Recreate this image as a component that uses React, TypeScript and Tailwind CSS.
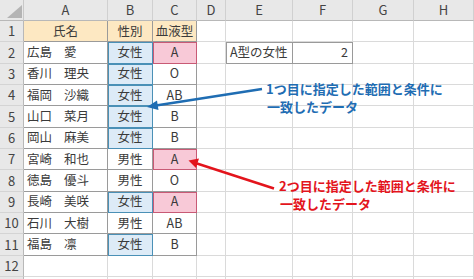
const cols = ['A', 'B', 'C', 'D', 'E', 'F', 'G', 'H'];

type Fill = 'head' | 'blue' | 'pink' | null;

const people: { sei: string; mei: string; sex: string; blood: string; sexFill: Fill; bloodFill: Fill }[] = [
  { sei: '広島', mei: '愛', sex: '女性', blood: 'A', sexFill: 'blue', bloodFill: 'pink' },
  { sei: '香川', mei: '理央', sex: '女性', blood: 'O', sexFill: 'blue', bloodFill: null },
  { sei: '福岡', mei: '沙織', sex: '女性', blood: 'AB', sexFill: 'blue', bloodFill: null },
  { sei: '山口', mei: '菜月', sex: '女性', blood: 'B', sexFill: 'blue', bloodFill: null },
  { sei: '岡山', mei: '麻美', sex: '女性', blood: 'B', sexFill: 'blue', bloodFill: null },
  { sei: '宮崎', mei: '和也', sex: '男性', blood: 'A', sexFill: null, bloodFill: 'pink' },
  { sei: '徳島', mei: '優斗', sex: '男性', blood: 'O', sexFill: null, bloodFill: null },
  { sei: '長崎', mei: '美咲', sex: '女性', blood: 'A', sexFill: 'blue', bloodFill: 'pink' },
  { sei: '石川', mei: '大樹', sex: '男性', blood: 'AB', sexFill: null, bloodFill: null },
  { sei: '福島', mei: '凛', sex: '女性', blood: 'B', sexFill: 'blue', bloodFill: null },
];

const font = { fontFamily: '"Noto Sans CJK JP", "Noto Sans", sans-serif' };

function Cell({
  children,
  fill = null,
  table = false,
  align = 'center',
  className = '',
}: {
  children?: React.ReactNode;
  fill?: Fill;
  table?: boolean;
  align?: 'left' | 'center' | 'right';
  className?: string;
}) {
  let tone = 'bg-white border-[#dadada]';
  if (table) tone = 'bg-white border-[#9a9a9a]';
  if (fill === 'head') tone = 'bg-[#fde8c2] border-[#9a9a9a]';
  if (fill === 'blue') tone = 'bg-[#ddebf7] border-[#4a90b6] shadow-[inset_1px_1px_0_#4a90b6]';
  if (fill === 'pink') tone = 'bg-[#f8c9d7] border-[#c85a75] shadow-[inset_1px_1px_0_#c85a75]';
  const justify =
    align === 'left' ? 'justify-start pl-[3px]' : align === 'right' ? 'justify-end pr-[4px]' : 'justify-center';
  return (
    <div className={`flex items-center ${justify} border-r border-b text-[12.5px] text-[#3a3a3a] ${tone} ${className}`}>
      {children}
    </div>
  );
}

function RowHead({ n }: { n?: number }) {
  return (
    <div className="flex items-center justify-center border-r border-b border-r-[#b8b8b8] border-b-[#d4d4d4] bg-[#e8e8e8] text-[13px] text-[#444]">
      {n}
    </div>
  );
}

export default function App() {
  const rows: React.ReactNode[] = [];

  // row 1: table header
  rows.push(
    <RowHead key="h1" n={1} />,
    <Cell key="a1" fill="head">氏名</Cell>,
    <Cell key="b1" fill="head">性別</Cell>,
    <Cell key="c1" fill="head">血液型</Cell>,
    ...[4, 5, 6, 7, 8].map((i) => <Cell key={`r1-${i}`} />),
  );

  people.forEach((p, i) => {
    const r = i + 2;
    rows.push(
      <RowHead key={`h${r}`} n={r} />,
      <Cell key={`a${r}`} table align="left">
        <span className="w-[37px]">{p.sei}</span>
        <span>{p.mei}</span>
      </Cell>,
      <Cell key={`b${r}`} table fill={p.sexFill}>{p.sex}</Cell>,
      <Cell key={`c${r}`} table fill={p.bloodFill}>{p.blood}</Cell>,
      <Cell key={`d${r}`} />,
    );
    if (r === 2) {
      rows.push(
        <Cell key="e2" table align="left" className="shadow-[inset_1px_1px_0_#9a9a9a] !pl-[4px]">
          A型の女性
        </Cell>,
        <Cell key="f2" table align="right" className="shadow-[inset_0_1px_0_#9a9a9a]">
          2
        </Cell>,
      );
    } else {
      rows.push(<Cell key={`e${r}`} />, <Cell key={`f${r}`} />);
    }
    rows.push(<Cell key={`g${r}`} />, <Cell key={`h${r}x`} />);
  });

  // row 12 plus the sliver of the next row at the bottom edge
  rows.push(<RowHead key="h12" n={12} />, ...cols.map((c) => <Cell key={`${c}12`} />));
  rows.push(<RowHead key="h13" />, ...cols.map((c) => <Cell key={`${c}13`} />));

  return (
    <div className="relative w-[474px] h-[279px] overflow-hidden bg-white" style={font}>
      <div className="grid grid-cols-[24px_84px_45px_44px_29px_67px_60px_61px_60px] grid-rows-[21px_repeat(13,21.33px)]">
        {/* corner + column letters */}
        <div className="relative border-r border-b border-r-[#c8c8c8] border-b-[#b8b8b8] bg-[#e8e8e8]">
          <svg className="absolute left-0 top-0" width="24" height="21" viewBox="0 0 24 21">
            <polygon points="7,18 22,18 22,5" fill="#b4b4b4" />
          </svg>
        </div>
        {cols.map((c) => (
          <div
            key={c}
            className="flex items-center justify-center border-r border-b border-r-[#d0d0d0] border-b-[#b8b8b8] bg-[#e8e8e8] text-[13px] text-[#444]"
          >
            {c}
          </div>
        ))}
        {rows}
      </div>

      {/* callout arrows */}
      <svg className="absolute left-0 top-0 pointer-events-none" width="474" height="279" viewBox="0 0 474 279">
        <line x1="262" y1="89" x2="156" y2="105.5" stroke="#1f6db3" strokeWidth="2.5" />
        <polygon points="147,107 157,100.5 158.5,110" fill="#1f6db3" />
        <line x1="274" y1="188.5" x2="197" y2="163.5" stroke="#e3141c" strokeWidth="2.5" />
        <polygon points="188.5,160.5 199,158.5 196,168" fill="#e3141c" />
      </svg>

      <div className="absolute left-[266px] top-[80px] text-[13px] font-bold leading-[18px] text-[#1f6db3]">
        <div>1つ目に指定した範囲と条件に</div>
        <div className="pl-[1px]">一致したデータ</div>
      </div>
      <div className="absolute left-[279px] top-[177px] text-[13px] font-bold leading-[18px] text-[#e3141c]">
        <div>2つ目に指定した範囲と条件に</div>
        <div className="pl-[1px]">一致したデータ</div>
      </div>
    </div>
  );
}
